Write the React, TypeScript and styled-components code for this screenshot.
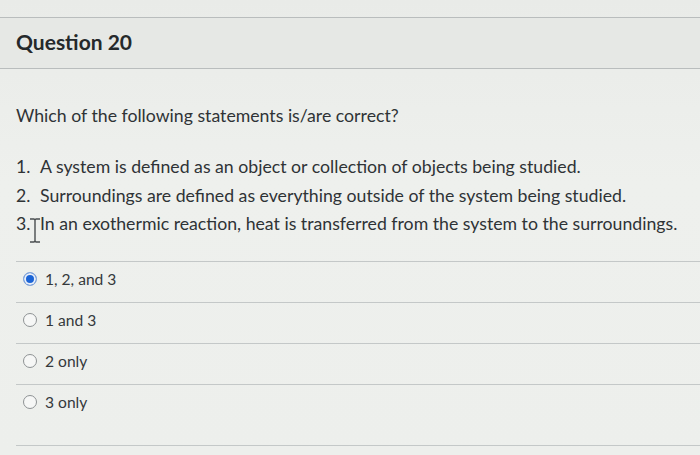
import React from 'react'
import styled, { createGlobalStyle } from 'styled-components'

const GlobalStyle = createGlobalStyle`
  html, body {
    margin: 0;
    padding: 0;
    background: #eceeeb;
  }
  body {
    font-family: Lato, 'Noto Sans', sans-serif;
    color: #2d3b45;
  }
`

const Page = styled.div`
  width: 700px;
  height: 455px;
  overflow: hidden;
  background: linear-gradient(180deg, #e9ebe8 0%, #eef0ed 40%, #edefec 100%);
  padding-top: 17px;
  box-sizing: border-box;
`

const Header = styled.div`
  height: 52px;
  border-top: 1px solid #b9bdbd;
  border-bottom: 1px solid #b9bdbd;
  background: #e6e8e5;
  display: flex;
  align-items: center;
  padding: 0 0 3px 16px;
  box-sizing: border-box;
`

const Title = styled.h2`
  margin: 0;
  font-size: 21px;
  font-weight: 700;
  color: #25292b;
`

const Body = styled.div`
  padding: 35px 0 0 16px;
`

const Prompt = styled.p`
  margin: 0 0 25px;
  font-size: 17.7px;
  line-height: 24px;
  color: #2f3336;
`

const List = styled.ol`
  position: relative;
  margin: 0;
  padding: 0;
  list-style: none;
  font-size: 17.7px;
  line-height: 28.5px;
  color: #2f3336;
`

const Item = styled.li`
  display: flex;
`

const Num = styled.span`
  width: 24px;
  flex: none;
`

const Cursor = styled.svg`
  position: absolute;
  left: 13px;
  top: 64px;
`

const Answers = styled.div`
  margin-top: 22px;
  border-bottom: 1px solid #c4c8c8;
`

const Option = styled.label`
  display: flex;
  align-items: center;
  gap: 8px;
  height: 41px;
  border-top: 1px solid #c4c8c8;
  padding: 0 0 6px 7px;
  font-size: 15.6px;
  color: #35393c;
  box-sizing: border-box;
`

const Radio = styled.span<{ checked?: boolean }>`
  width: 14px;
  height: 14px;
  flex: none;
  border-radius: 50%;
  box-sizing: border-box;
  border: ${(p) => (p.checked ? '1.5px solid #8aa9d8' : '1.5px solid #8e9294')};
  background: ${(p) => (p.checked ? '#1b64d6' : '#f6f7f6')};
  box-shadow: ${(p) => (p.checked ? 'inset 0 0 0 2px #e8eef8' : 'none')};
`

const Tail = styled.div`
  height: 20px;
`

const statements = [
  'A system is defined as an object or collection of objects being studied.',
  'Surroundings are defined as everything outside of the system being studied.',
  'In an exothermic reaction, heat is transferred from the system to the surroundings.',
]

const options = ['1, 2, and 3', '1 and 3', '2 only', '3 only']

export default function App() {
  return (
    <Page>
      <GlobalStyle />
      <Header>
        <Title>Question 20</Title>
      </Header>
      <Body>
        <Prompt>Which of the following statements is/are correct?</Prompt>
        <List>
          {statements.map((s, i) => (
            <Item key={s}>
              <Num>{i + 1}.</Num>
              {s}
            </Item>
          ))}
          <Cursor width="12" height="27" viewBox="0 0 12 27">
            <path d="M1 2h4l1 1 1-1h4M6 3v21M1 25h4l1-1 1 1h4" fill="none" stroke="#4a4e50" strokeWidth="1.4" />
          </Cursor>
        </List>
        <Answers>
          {options.map((o, i) => (
            <Option key={o}>
              <Radio checked={i === 0} />
              {o}
            </Option>
          ))}
          <Tail />
        </Answers>
      </Body>
    </Page>
  )
}
